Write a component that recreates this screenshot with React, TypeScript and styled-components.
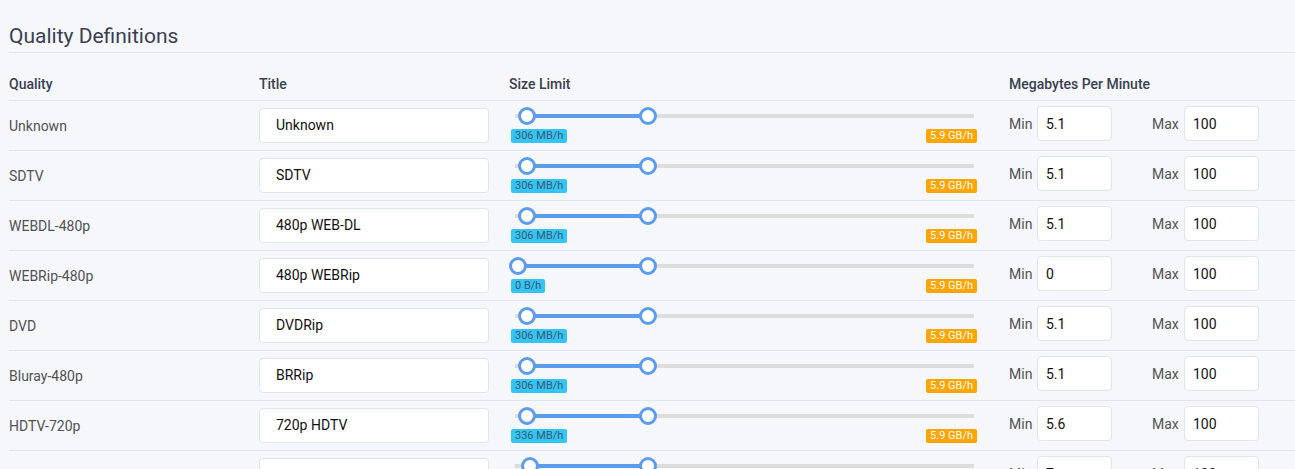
import React from "react";
import styled, { createGlobalStyle } from "styled-components";

const GlobalStyle = createGlobalStyle`
  html, body {
    margin: 0;
    padding: 0;
    background: #f5f7fa;
    font-family: Roboto, "Open Sans", "Liberation Sans", sans-serif;
    color: #3a3f51;
    overflow: hidden;
  }
`;

type Definition = {
  quality: string;
  title: string;
  min: string;
  max: string;
  minPos: number; // px from track start
  maxPos: number;
  minLabel: string;
  maxLabel: string;
};

const definitions: Definition[] = [
  { quality: "Unknown", title: "Unknown", min: "5.1", max: "100", minPos: 12, maxPos: 133, minLabel: "306 MB/h", maxLabel: "5.9 GB/h" },
  { quality: "SDTV", title: "SDTV", min: "5.1", max: "100", minPos: 12, maxPos: 133, minLabel: "306 MB/h", maxLabel: "5.9 GB/h" },
  { quality: "WEBDL-480p", title: "480p WEB-DL", min: "5.1", max: "100", minPos: 12, maxPos: 133, minLabel: "306 MB/h", maxLabel: "5.9 GB/h" },
  { quality: "WEBRip-480p", title: "480p WEBRip", min: "0", max: "100", minPos: 3, maxPos: 133, minLabel: "0 B/h", maxLabel: "5.9 GB/h" },
  { quality: "DVD", title: "DVDRip", min: "5.1", max: "100", minPos: 12, maxPos: 133, minLabel: "306 MB/h", maxLabel: "5.9 GB/h" },
  { quality: "Bluray-480p", title: "BRRip", min: "5.1", max: "100", minPos: 12, maxPos: 133, minLabel: "306 MB/h", maxLabel: "5.9 GB/h" },
  { quality: "HDTV-720p", title: "720p HDTV", min: "5.6", max: "100", minPos: 12, maxPos: 133, minLabel: "336 MB/h", maxLabel: "5.9 GB/h" },
  { quality: "HDTV-1080p", title: "1080p HDTV", min: "7", max: "100", minPos: 15, maxPos: 133, minLabel: "420 MB/h", maxLabel: "5.9 GB/h" },
];

const Page = styled.div`
  padding: 21px 0 0 9px;
`;

const Legend = styled.div`
  font-size: 21px;
  font-weight: 400;
  line-height: 31px;
  border-bottom: 1px solid #e5e5e5;
`;

const Table = styled.div`
  display: flex;
  flex-direction: column;
`;

const Row = styled.div<{ $header?: boolean }>`
  display: grid;
  grid-template-columns: 250px 250px 500px 1fr;
  height: ${(p) => (p.$header ? "48px" : "50px")};
  border-bottom: 1px solid #dde6e9;
  box-sizing: border-box;
  font-size: 14px;
`;

const HeadCell = styled.div`
  padding-top: 21px;
  line-height: 20px;
  font-weight: 500;
  color: #3a3f51;
`;

const Cell = styled.div`
  display: flex;
  align-items: center;
  color: #515253;
`;

const TextInput = styled.input`
  box-sizing: border-box;
  width: 230px;
  height: 35px;
  margin-top: -1px;
  padding: 0 16px;
  border: 1px solid #dde6e9;
  border-radius: 4px;
  background: #fff;
  font: 14px Roboto, "Open Sans", sans-serif;
  color: #111;
  outline: none;
`;

const SliderCell = styled.div`
  padding: 13px 0 0 2px;
`;

const Track = styled.div`
  position: relative;
  width: 459px;
  margin-left: 4px;
  height: 4px;
  background: #dddddd;
`;

const Fill = styled.div`
  position: absolute;
  top: 0;
  height: 4px;
  background: #5d9cec;
`;

const Thumb = styled.div`
  position: absolute;
  top: -7px;
  width: 18px;
  height: 18px;
  margin-left: -9px;
  box-sizing: border-box;
  border: 3px solid #5d9cec;
  border-radius: 50%;
  background: #fff;
`;

const Labels = styled.div`
  display: flex;
  justify-content: space-between;
  width: 466px;
  margin-top: 11px;
`;

const SizeLabel = styled.span<{ $kind: "info" | "warning" }>`
  display: inline-block;
  height: 14px;
  line-height: 14px;
  padding: 0 4px;
  border-radius: 2px;
  font-size: 11px;
  background: ${(p) => (p.$kind === "info" ? "#35c5f4" : "#ffa500")};
  color: ${(p) => (p.$kind === "info" ? "#3a5a70" : "#fff")};
`;

const MbCell = styled.div`
  display: grid;
  grid-template-columns: 143px 120px;
  align-items: center;
`;

const MbGroup = styled.div`
  display: flex;
  align-items: center;
  margin-top: -4px;
  color: #515253;
`;

const MbLabel = styled.span`
  width: 28px;
`;

const MaxLabel = styled(MbLabel)`
  width: 32px;
`;

const MbInput = styled.input`
  box-sizing: border-box;
  width: 75px;
  height: 35px;
  padding: 0 8px;
  border: 1px solid #dde6e9;
  border-radius: 4px;
  background: #fff;
  font: 14px Roboto, "Open Sans", sans-serif;
  color: #111;
  outline: none;
`;

const Slider = ({ d }: { d: Definition }) => (
  <SliderCell>
    <Track>
      <Fill style={{ left: d.minPos, width: d.maxPos - d.minPos }} />
      <Thumb style={{ left: d.minPos }} />
      <Thumb style={{ left: d.maxPos }} />
    </Track>
    <Labels>
      <SizeLabel $kind="info">{d.minLabel}</SizeLabel>
      <SizeLabel $kind="warning">{d.maxLabel}</SizeLabel>
    </Labels>
  </SliderCell>
);

export default function App() {
  return (
    <Page>
      <GlobalStyle />
      <Legend>Quality Definitions</Legend>
      <Table>
        <Row $header>
          <HeadCell>Quality</HeadCell>
          <HeadCell>Title</HeadCell>
          <HeadCell>Size Limit</HeadCell>
          <HeadCell>Megabytes Per Minute</HeadCell>
        </Row>
        {definitions.map((d) => (
          <Row key={d.quality}>
            <Cell>{d.quality}</Cell>
            <Cell>
              <TextInput defaultValue={d.title} />
            </Cell>
            <Slider d={d} />
            <MbCell>
              <MbGroup>
                <MbLabel>Min</MbLabel>
                <MbInput defaultValue={d.min} />
              </MbGroup>
              <MbGroup>
                <MaxLabel>Max</MaxLabel>
                <MbInput defaultValue={d.max} />
              </MbGroup>
            </MbCell>
          </Row>
        ))}
      </Table>
    </Page>
  );
}
